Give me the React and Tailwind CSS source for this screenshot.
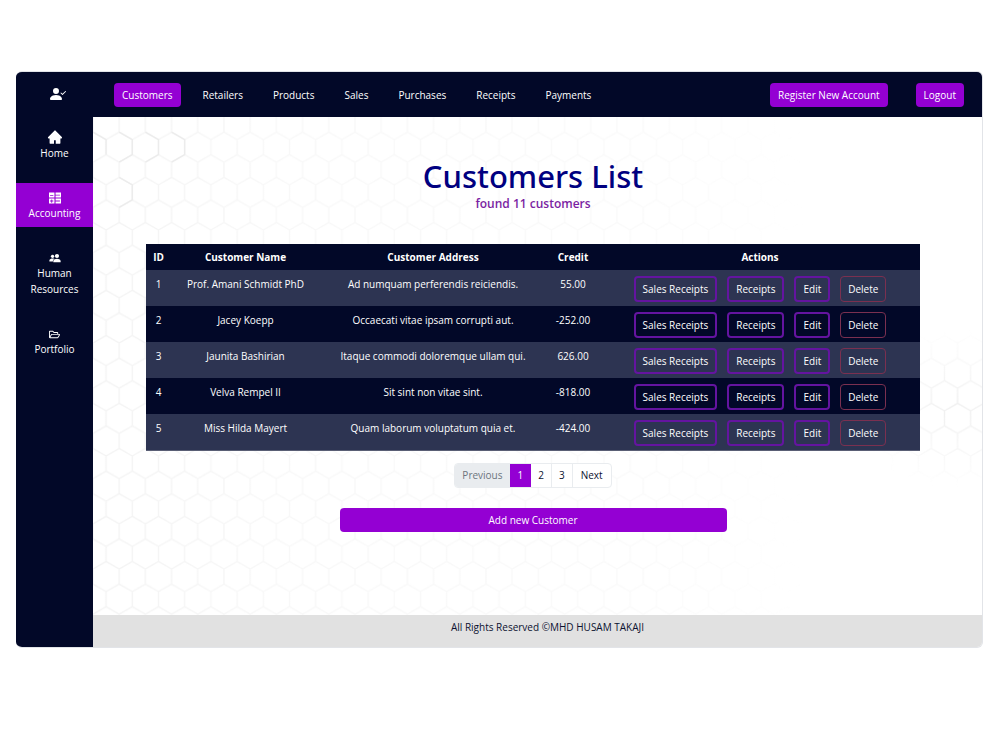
import React from 'react';
import { BsPersonCheckFill } from 'react-icons/bs';
import { AiFillHome } from 'react-icons/ai';
import { FaRegFolderOpen } from 'react-icons/fa';
import { IoPeopleSharp } from 'react-icons/io5';

function LedgerIcon({ className }) {
  return (
    <svg viewBox="0 0 22 20" fill="currentColor" className={className}>
      <path fillRule="evenodd" d="M0 0h10v9H0zM2 5h6v1.4H2z" />
      <path fillRule="evenodd" d="M12 0h10v9H12zM12 4h8v1.4h-8z" />
      <path fillRule="evenodd" d="M0 11h10v9H0zM4.2 12.6v2.2H2v1.6h2.2v2.2h1.6v-2.2H8v-1.6H5.8v-2.2z" />
      <path fillRule="evenodd" d="M12 11h10v9H12zM12 14.8h8v1.4h-8z" />
    </svg>
  );
}

const sideLinks = [
  { icon: AiFillHome, label: 'Home', size: 'size-4', box: 'h-4', spacing: 'mb-4' },
  { icon: LedgerIcon, label: 'Accounting', size: 'size-3', box: 'h-3.5', spacing: 'mb-6 pt-2', active: true },
  { icon: IoPeopleSharp, label: 'Human Resources', size: 'size-3', box: 'h-3.5', spacing: 'mb-6' },
  { icon: FaRegFolderOpen, label: 'Portfolio', size: 'size-[11px]', box: 'h-3.5', spacing: 'mb-6' },
];

const tabs = ['Customers', 'Retailers', 'Products', 'Sales', 'Purchases', 'Receipts', 'Payments'];

const customers = [
  { id: 1, name: 'Prof. Amani Schmidt PhD', address: 'Ad numquam perferendis reiciendis.', credit: '55.00' },
  { id: 2, name: 'Jacey Koepp', address: 'Occaecati vitae ipsam corrupti aut.', credit: '-252.00' },
  { id: 3, name: 'Jaunita Bashirian', address: 'Itaque commodi doloremque ullam qui.', credit: '626.00' },
  { id: 4, name: 'Velva Rempel II', address: 'Sit sint non vitae sint.', credit: '-818.00' },
  { id: 5, name: 'Miss Hilda Mayert', address: 'Quam laborum voluptatum quia et.', credit: '-424.00' },
];

function HexBackground() {
  return (
    <svg className="absolute inset-0 size-full" aria-hidden="true">
      <defs>
        <pattern id="hex" width="26.2" height="45.2" patternUnits="userSpaceOnUse">
          <path
            d="M13.1 22.6v15M13.1 22.6L0 15.1M13.1 22.6L26.2 15.1M13.1 37.6L0 45.2M13.1 37.6L26.2 45.2M0 0v15.1M26.2 0v15.1"
            fill="none"
            stroke="#ebebeb"
            strokeWidth="1.4"
          />
        </pattern>
        <linearGradient id="fade">
          <stop offset="0" stopColor="#fff" stopOpacity="0.6" />
          <stop offset="0.2" stopColor="#fff" stopOpacity="0.35" />
          <stop offset="0.6" stopColor="#fff" stopOpacity="0.25" />
          <stop offset="0.8" stopColor="#fff" stopOpacity="0" />
        </linearGradient>
        <radialGradient id="spot">
          <stop offset="0" stopColor="#fff" stopOpacity="0.8" />
          <stop offset="1" stopColor="#fff" stopOpacity="0" />
        </radialGradient>
        <mask id="hexMask">
          <rect width="100%" height="100%" fill="url(#fade)" />
          <ellipse cx="97%" cy="55%" rx="100" ry="80" fill="url(#spot)" />
        </mask>
      </defs>
      <rect width="100%" height="100%" fill="url(#hex)" mask="url(#hexMask)" />
      <path
        d="M0 15.1l13.1 7.5v15M26.2 15.1l13.1 7.5v15l-13.1 7.6M52.4 15.1l13.1 7.5v15l-13.1 7.6M78.6 15.1l13.1 7.5v15l-13.1 7.6M26.2 60.3l13.1 7.5v15l-13.1 7.6"
        fill="none"
        stroke="#ececec"
        strokeWidth="1.4"
      />
    </svg>
  );
}

function Sidebar() {
  return (
    <aside className="flex w-[77px] shrink-0 flex-col bg-[#020828] text-center text-white">
      <div className="flex h-11 items-center justify-center pl-1.5">
        <BsPersonCheckFill className="size-4" />
      </div>
      <nav className="flex flex-col pt-[13px]">
        {sideLinks.map((link) => (
          <a
            key={link.label}
            href="#"
            className={`flex flex-col items-center px-2 pb-1.5 leading-4 ${link.spacing} ${link.active ? 'bg-[#9400d3]' : ''}`}
          >
            <span className={`flex items-center ${link.box}`}>
              <link.icon className={link.size} />
            </span>
            {link.label}
          </a>
        ))}
      </nav>
    </aside>
  );
}

function Topbar() {
  return (
    <header className="flex h-[45px] items-center justify-between bg-[#020828] pr-[18px] pl-[21px] text-white">
      <nav className="flex gap-3.5">
        {tabs.map((tab, index) => (
          <a key={tab} href="#" className={`rounded px-2 leading-6 ${index === 0 ? 'bg-[#9400d3]' : ''}`}>
            {tab}
          </a>
        ))}
      </nav>
      <div className="flex gap-7">
        <button className="rounded bg-[#9400d3] px-2 leading-6">Register New Account</button>
        <button className="rounded bg-[#9400d3] px-2 leading-6">Logout</button>
      </div>
    </header>
  );
}

function ActionButton({ danger, children }) {
  return (
    <button
      className={`rounded px-[7px] leading-[22px] ${danger ? 'border border-[#7b3050]' : 'border-2 border-[#6414a0]'}`}
    >
      {children}
    </button>
  );
}

function CustomersTable() {
  return (
    <table className="w-full table-fixed border-b border-[#5a5f75] bg-[#020828] text-center text-white">
      <colgroup>
        <col className="w-[25px]" />
        <col className="w-[149px]" />
        <col className="w-[226px]" />
        <col className="w-[54px]" />
        <col />
      </colgroup>
      <thead>
        <tr className="h-[26px]">
          <th>ID</th>
          <th>Customer Name</th>
          <th>Customer Address</th>
          <th>Credit</th>
          <th>Actions</th>
        </tr>
      </thead>
      <tbody>
        {customers.map((customer) => (
          <tr key={customer.id} className="align-top odd:bg-[#2d3452]">
            <td className="pt-[7px]">{customer.id}</td>
            <td className="pt-[7px]">{customer.name}</td>
            <td className="pt-[7px]">{customer.address}</td>
            <td className="pt-[7px]">{customer.credit}</td>
            <td className="pt-1.5 pb-1">
              <div className="flex justify-center gap-2.5">
                <ActionButton>Sales Receipts</ActionButton>
                <ActionButton>Receipts</ActionButton>
                <ActionButton>Edit</ActionButton>
                <ActionButton danger>Delete</ActionButton>
              </div>
            </td>
          </tr>
        ))}
      </tbody>
    </table>
  );
}

function Pagination() {
  return (
    <nav className="flex overflow-hidden rounded border border-[#e9ecef] bg-white leading-[23px]">
      <button disabled className="bg-[#e9ecef] px-[7px] text-[#6c757d]">Previous</button>
      <button className="bg-[#9400d3] px-2 text-white">1</button>
      <button className="border-r border-[#e9ecef] px-[7px]">2</button>
      <button className="border-r border-[#e9ecef] px-[7px]">3</button>
      <button className="px-2">Next</button>
    </nav>
  );
}

export default function App() {
  return (
    <div className="min-h-screen bg-white pt-[71px] pr-[17px] pl-4 font-['Open_Sans',sans-serif] text-[10px] text-[#0c1230]">
      <div className="flex min-h-[577px] overflow-hidden rounded-md border-t border-r border-b border-[#e2e4e8]">
        <Sidebar />
        <div className="flex min-w-0 flex-1 flex-col">
          <Topbar />
          <div className="relative flex flex-1 flex-col">
            <HexBackground />
            <main className="relative flex flex-1 flex-col items-center pt-10 pr-[62px] pl-[53px]">
              <h1 className="font-['Noto_Sans',sans-serif] text-[31px] leading-[39px] font-medium text-[#000080]">
                Customers List
              </h1>
              <p className="text-xs leading-4 font-semibold text-[#7b1fa2]">found 11 customers</p>
              <div className="mt-8 mb-3 w-full">
                <CustomersTable />
              </div>
              <Pagination />
              <button className="mt-5 w-1/2 rounded bg-[#9400d3] leading-6 text-white">Add new Customer</button>
            </main>
            <footer className="relative h-8 bg-[#e1e1e1] pl-5 text-center leading-6">
              All Rights Reserved ©MHD HUSAM TAKAJI
            </footer>
          </div>
        </div>
      </div>
    </div>
  );
}
